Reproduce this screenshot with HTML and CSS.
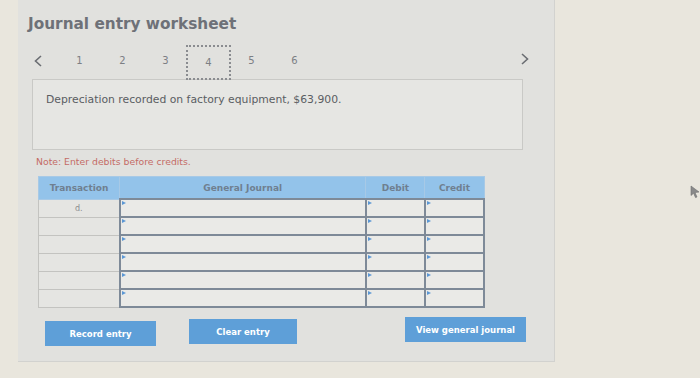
FILE: index.html
```html
<!DOCTYPE html>
<html lang="en">
<head>
  <meta charset="UTF-8">
  <meta name="viewport" content="width=device-width, initial-scale=1.0">
  <title>Journal entry worksheet</title>
  <link rel="stylesheet" href="styles.css">
</head>
<body>
  <div class="worksheet">
    <h1>Journal entry worksheet</h1>

    <div class="steps">
      <span class="arrow">
        <svg width="10" height="12" viewBox="0 0 10 12"><path d="M8 1 L2.5 6 L8 11" fill="none" stroke="#6a6d72" stroke-width="1.6"/></svg>
      </span>
      <span class="step">1</span>
      <span class="step">2</span>
      <span class="step">3</span>
      <span class="step current">4</span>
      <span class="step">5</span>
      <span class="step">6</span>
      <span class="arrow next">
        <svg width="10" height="12" viewBox="0 0 10 12"><path d="M2 1 L7.5 6 L2 11" fill="none" stroke="#6a6d72" stroke-width="1.6"/></svg>
      </span>
    </div>

    <div class="description">Depreciation recorded on factory equipment, $63,900.</div>

    <p class="note">Note: Enter debits before credits.</p>

    <table class="journal">
      <thead>
        <tr>
          <th class="col-trans">Transaction</th>
          <th class="col-account">General Journal</th>
          <th class="col-amount">Debit</th>
          <th class="col-amount">Credit</th>
        </tr>
      </thead>
      <tbody id="rows"></tbody>
    </table>

    <div class="actions">
      <button class="record">Record entry</button>
      <button class="clear">Clear entry</button>
      <button class="view">View general journal</button>
    </div>
  </div>

  <svg class="cursor" width="10" height="14" viewBox="0 0 10 14">
    <path d="M1 1 L9 7 L5 7.5 L7 12 L5.5 12.6 L3.6 8.2 L1 10.5 Z" fill="#8a8a8a" stroke="#6f6f6f" stroke-width="0.6"/>
  </svg>

  <script>
    const rows = document.getElementById('rows');
    for (let i = 0; i < 6; i++) {
      const tr = document.createElement('tr');
      tr.innerHTML =
        '<td class="col-trans">' + (i === 0 ? 'd.' : '') + '</td>' +
        '<td class="field"></td><td class="field"></td><td class="field"></td>';
      rows.appendChild(tr);
    }
  </script>
</body>
</html>
```

FILE: styles.css
```css
body {
  margin: 0;
  background: #e9e6dd;
  font-family: "DejaVu Sans", Verdana, sans-serif;
  width: 700px;
  height: 378px;
  overflow: hidden;
}
.worksheet {
  width: 537px;
  height: 362px;
  margin-left: 18px;
  background: #e1e1de;
  box-sizing: border-box;
  padding-top: 14px;
  border-right: 1px solid #d2d2cf;
  border-bottom: 1px solid #d2d2cf;
}
h1 {
  margin: 0 0 0 10px;
  font-size: 15.3px;
  font-weight: bold;
  color: #6e7178;
  line-height: 20px;
}
.steps {
  display: flex;
  align-items: center;
  height: 35px;
  margin-top: 11px;
  color: #7c7f84;
  font-size: 10px;
}
.arrow {
  display: flex;
  justify-content: center;
  width: 40px;
  margin-top: -3px;
}
.step {
  width: 43px;
  height: 35px;
  line-height: 31px;
  text-align: center;
  box-sizing: border-box;
}
.step.current {
  width: 45px;
  margin: 0 -1px;
  line-height: 31px;
  border: 2px dotted #8a8c90;
}
.arrow.next {
  margin-left: auto;
  margin-right: 24px;
  margin-top: -8px;
  width: 10px;
}
.description {
  width: 491px;
  height: 71px;
  margin: -1px 0 0 14px;
  box-sizing: border-box;
  border: 1px solid #c9c9c6;
  background: #e6e6e3;
  padding: 13px 0 0 13px;
  font-size: 10.8px;
  color: #5a5d62;
}
.note {
  margin: 6px 0 0 18px;
  font-size: 9.3px;
  color: #c46c66;
  line-height: 11px;
}
.journal {
  margin: 9px 0 0 20px;
  width: 447px;
  border-collapse: collapse;
  table-layout: fixed;
}
.journal th {
  height: 21px;
  padding: 0;
  background: #93c3ea;
  color: #6f7f90;
  font-size: 9px;
  font-weight: bold;
  border: 1px solid #a7c9e6;
}
.col-trans { width: 80px; }
.col-account { width: 245px; }
.col-amount { width: 58px; }
.journal td {
  height: 16px;
  padding: 0;
}
.journal td.col-trans {
  border: 1px solid #c3c3c0;
  background: #e5e5e2;
  text-align: center;
  font-size: 8px;
  color: #8a8c90;
}
.journal td.field {
  position: relative;
  border: 2px solid #7e8a98;
  background: #eaeae7;
}
.journal td.field::before {
  content: "";
  position: absolute;
  left: 1px;
  top: 1px;
  border-left: 4px solid #5b97d4;
  border-top: 2px solid transparent;
  border-bottom: 2px solid transparent;
}
.actions {
  display: flex;
  align-items: flex-start;
  margin: 11px 0 0 27px;
}
button {
  background: #5e9fd8;
  color: #fff;
  border: none;
  font-family: "DejaVu Sans", Verdana, sans-serif;
  font-size: 8.5px;
  font-weight: bold;
  height: 25px;
  padding: 0;
  cursor: pointer;
}
.record { width: 111px; margin-top: 2px; }
.clear { width: 108px; margin-left: 33px; }
.view { width: 121px; margin-left: 108px; margin-top: -2px; }
.cursor {
  position: absolute;
  left: 690px;
  top: 185px;
}
```
